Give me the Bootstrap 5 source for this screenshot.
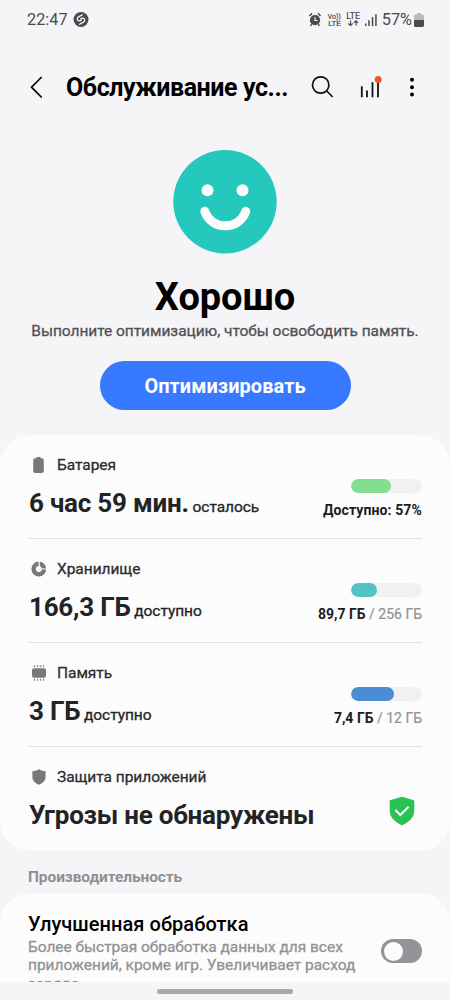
<!DOCTYPE html>
<html lang="ru">
<head>
<meta charset="utf-8">
<meta name="viewport" content="width=device-width, initial-scale=1">
<title>Обслуживание устройства</title>
<link href="https://cdn.jsdelivr.net/npm/bootstrap@5.3.0/dist/css/bootstrap.min.css" rel="stylesheet">
<style>
body{font-family:Roboto,"Noto Sans",sans-serif;background:#f5f5f8;color:#222325;width:450px;height:1000px}
svg{display:block;flex:none}
.status{height:39px;padding:1px 26px 0 27px;font-size:16.3px;color:#4b4b4d}
.topbar{height:97px;padding:0 24px 0 28px;color:#000}
.topbar h1{font-size:25px;font-weight:700;line-height:34px;letter-spacing:-.42px;width:224px;margin:1px 0 0 22px}
.face{margin-top:14px}
.mood{font-size:38px;font-weight:700;line-height:46px;margin-top:20px;color:#000;letter-spacing:-.1px}
.hint{font-size:15.5px;line-height:22px;color:#505053;-webkit-text-stroke:.3px;letter-spacing:-.045px}
.go{width:251px;height:49px;margin-top:19px;padding:0;background:#387aff;font-size:20px;font-weight:700;color:#fff;letter-spacing:.05px}
.panel{background:#fcfcfc;border-radius:30px}
.stat-row{height:104px;padding-top:19px;margin:0 28px;border-bottom:1px solid #dfe0e4}
.stat-row:last-child{border:0}
.label-line{line-height:22px;font-size:15.5px;gap:9px;color:#2c2c2e;-webkit-text-stroke:.3px;letter-spacing:-.04px}
.value-line{line-height:34px;font-size:15.5px;margin:10px 0 0 1px;-webkit-text-stroke:.3px;letter-spacing:-.05px}
.value-line b{font-size:26px;font-weight:700;letter-spacing:-.23px;-webkit-text-stroke:0}
.side{padding-top:25px;font-size:14px;line-height:20px}
.side b{font-weight:700;color:#1b1c1e}
.avail{letter-spacing:.12px}
.meter{width:71px;height:14px;border-radius:7px;background:#f1f1f1;margin-bottom:7px}
.meter .progress-bar{border-radius:7px}
.green{background:#82de90}.teal{background:#53c2c4}.blue{background:#4b8dd5}
.muted{color:#929294;-webkit-text-stroke:.2px}
.muted b{-webkit-text-stroke:0}
.section-name{font-size:15.5px;font-weight:700;line-height:22px;color:#8f8f92;margin:15px 28px 5px;letter-spacing:-.1px}
.perf{height:89px;border-radius:30px 30px 0 0;padding:18px 28px 0}
.perf h2{font-size:20px;font-weight:500;line-height:26px;color:#000;letter-spacing:.05px}
.perf p{font-size:15.5px;line-height:18.3px;color:#929294;-webkit-text-stroke:.3px;letter-spacing:-.03px;padding-top:1px}
.toggle{width:41px;height:24px;border-radius:12px;background:#949398;padding:2.5px;margin-top:28px}
.toggle i{width:19px;height:19px;border-radius:50%;background:#fcfcfc}
.navpill{width:136px;height:5px;border-radius:3px;background:#a9a9a9;margin:7px auto 0}
</style>
</head>
<body class="overflow-hidden d-flex flex-column">
<div class="status d-flex align-items-center justify-content-between flex-shrink-0">
 <div class="d-flex align-items-center"><span class="clock">22:47</span>
  <svg style="margin-left:5px" width="16" height="16" viewBox="0 0 16 16"><circle cx="8" cy="7.500" r="7.500" fill="#4b4b4d"/><path d="M9.400 2.800 5.600 4.900C3.700 6 4 8.500 6 8.900c1 .2 1.800-.3 2.400-.8M6.600 12.200l3.800-2.100c1.900-1.100 1.600-3.600-.4-4-1-.2-1.800.3-2.400.8" fill="none" stroke="#f5f5f8" stroke-width="1.300" stroke-linecap="round"/></svg></div>
 <div class="d-flex align-items-center">
  <svg width="70" height="16" viewBox="0 0 70 16" fill="#4b4b4d"><circle cx="8" cy="8.200" r="5.100"/><path d="m2.400 4 2.600-2.600M13.600 4 11 1.400M4.700 12.200 3.600 13.800M11.300 12.200l1.100 1.600" stroke="#4b4b4d" stroke-width="1.500"/><path d="M8 5.300v3.200h2.600" fill="none" stroke="#f5f5f8" stroke-width="1.200"/>
   <g font-size="7.800" stroke="#4b4b4d" stroke-width=".2"><text x="20.800" y="6.800" textLength="13" lengthAdjust="spacingAndGlyphs">Vo))</text><text x="21.300" y="14" textLength="12.500" lengthAdjust="spacingAndGlyphs">LTE</text><text x="39.200" y="7" font-size="8.500" textLength="13.800" lengthAdjust="spacingAndGlyphs">LTE</text></g>
   <path d="M43.500 8.500v5m-2.200-2 2.200 2 2.200-2M49 13.800V8.800m-2.200 2 2.200-2 2.200 2" fill="none" stroke="#4b4b4d" stroke-width="1.100"/><path d="M58 11.500h1.500V14H58zM61.200 8.300h1.500V14h-1.500zM64.800 5h1.500v9h-1.500zM68.200 2.200h1.500V14h-1.500z"/></svg>
  <span class="pct" style="margin-left:5px">57%</span>
  <svg style="margin-left:2px" width="10" height="14" viewBox="0 0 10 14"><path d="M3 0h4v1.500h1.500Q10 1.500 10 3v4H0V3q0-1.500 1.500-1.500H3z" fill="#bcbcbd"/><path d="M0 7h10v5.300Q10 14 8.500 14h-7Q0 14 0 12.300z" fill="#4b4b4d"/></svg>
 </div>
</div>
<header class="topbar d-flex align-items-center flex-shrink-0">
 <svg width="16" height="24" viewBox="0 0 16 24"><path d="M13.700 1 3.500 11.200l10.200 10.300" fill="none" stroke="#000" stroke-width="1.700"/></svg>
 <h1 class="text-nowrap">Обслуживание ус...</h1>
 <svg style="margin-left:21px" width="24" height="24" viewBox="0 0 24 24" fill="none" stroke="#111" stroke-width="1.700"><circle cx="9.700" cy="9" r="8.200"/><path d="m15.700 15 6 6"/></svg>
 <svg style="margin-left:23px" width="24" height="24" viewBox="0 0 24 24"><path d="M3.800 10.300V21.300M9 14.500V21.300M14.500 6.300V21.300M20 4.800V21.300" stroke="#111" stroke-width="1.800"/><circle cx="20.200" cy="3.600" r="3.500" fill="#ea5b1b"/></svg>
 <svg style="margin-left:25px" width="10" height="24" viewBox="0 0 10 24"><circle cx="5" cy="3.800" r="2"/><circle cx="5" cy="11.200" r="2"/><circle cx="5" cy="18.500" r="2"/></svg>
</header>
<main class="flex-shrink-0">
 <section class="d-flex flex-column align-items-center">
  <svg class="face" width="104" height="104" viewBox="0 0 104 104"><circle cx="52" cy="51.700" r="51.700" fill="#24c8bc"/><g fill="#fcfcfc"><circle cx="34.500" cy="40.300" r="6"/><circle cx="69.500" cy="40.300" r="6"/></g><path d="M31.800 61.300C38.500 80.700 66 80.700 72.800 61.300" fill="none" stroke="#fcfcfc" stroke-width="9" stroke-linecap="round"/></svg>
  <div class="mood">Хорошо</div>
  <div class="hint text-nowrap">Выполните оптимизацию, чтобы освободить память.</div>
  <button class="go btn rounded-pill border-0">Оптимизировать</button>
 </section>
 <section class="panel" style="margin-top:25px">
  <div class="stat-row d-flex justify-content-between">
   <div><div class="label-line d-flex align-items-center"><svg width="20" height="20" viewBox="0 0 20 20" fill="#78787a"><path d="M8.500 2h4v1.200h1.300q2 0 2 2V16q0 2-2 2H7.200q-2 0-2-2V5.200q0-2 2-2h1.300z"/></svg><span>Батарея</span></div>
   <div class="value-line text-nowrap"><b>6 час 59 мин.</b> осталось</div></div>
   <div class="side d-flex flex-column align-items-end"><div class="meter progress"><div class="progress-bar green" style="width:57%"></div></div><b class="avail">Доступно: 57%</b></div>
  </div>
  <div class="stat-row d-flex justify-content-between">
   <div><div class="label-line d-flex align-items-center"><svg width="20" height="20" viewBox="0 0 20 20"><circle cx="10.800" cy="10" r="5.200" fill="none" stroke="#78787a" stroke-width="4.400"/><path d="M11.200 1v9h8.500" fill="none" stroke="#fcfcfc" stroke-width="1.200"/></svg><span>Хранилище</span></div>
   <div class="value-line text-nowrap"><b>166,3 ГБ</b> доступно</div></div>
   <div class="side d-flex flex-column align-items-end"><div class="meter progress"><div class="progress-bar teal" style="width:36.500%"></div></div><span class="muted"><b>89,7 ГБ</b> / 256 ГБ</span></div>
  </div>
  <div class="stat-row d-flex justify-content-between">
   <div><div class="label-line d-flex align-items-center"><svg width="20" height="20" viewBox="0 0 20 20"><rect x="4" y="5.300" width="14" height="9.400" rx="2" fill="#78787a"/><path d="M6.500 2.300v2M9.500 2.300v2M12.500 2.300v2M15.500 2.300v2M6.500 15.700v2M9.500 15.700v2M12.500 15.700v2M15.500 15.700v2" stroke="#8a8a8c" stroke-width="1.300"/></svg><span>Память</span></div>
   <div class="value-line text-nowrap"><b>3 ГБ</b> доступно</div></div>
   <div class="side d-flex flex-column align-items-end"><div class="meter progress"><div class="progress-bar blue" style="width:60.500%"></div></div><span class="muted"><b>7,4 ГБ</b> / 12 ГБ</span></div>
  </div>
  <div class="stat-row d-flex justify-content-between">
   <div><div class="label-line d-flex align-items-center"><svg width="20" height="20" viewBox="0 0 20 20"><path d="M11 2.200Q14 4 17.600 4.300V10c0 4-3.300 6.300-6.600 7.800C7.700 16.300 4.400 14 4.400 10V4.300Q8 4 11 2.200z" fill="#78787a"/></svg><span>Защита приложений</span></div>
   <div class="value-line text-nowrap"><b>Угрозы не обнаружены</b></div></div>
   <svg style="margin:30px 7px 0 0" width="26" height="30" viewBox="0 0 26 30"><path d="M13 .7 24.300 3.900Q25.300 4.200 25.300 5.200V14.700c0 6.800-5.500 11.300-12.300 14.700C6.200 26 .7 21.500.7 14.700V5.200Q.7 4.200 1.700 3.900z" fill="#29c253"/><path d="m6.300 14 5 5 8.300-8.200" fill="none" stroke="#fcfcfc" stroke-width="2"/></svg>
  </div>
 </section>
 <div class="section-name">Производительность</div>
 <section class="panel perf d-flex justify-content-between overflow-hidden">
  <div><h2 class="m-0">Улучшенная обработка</h2><p class="m-0 text-nowrap">Более быстрая обработка данных для всех<br>приложений, кроме игр. Увеличивает расход<br>заряда.</p></div>
  <div class="toggle d-flex flex-shrink-0"><i></i></div>
 </section>
</main>
<div class="navpill flex-shrink-0"></div>
<script src="https://cdn.jsdelivr.net/npm/bootstrap@5.3.0/dist/js/bootstrap.bundle.min.js"></script>
</body>
</html>
